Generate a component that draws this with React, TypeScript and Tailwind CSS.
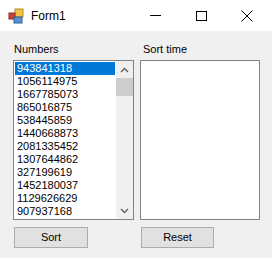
import { FC } from "react";

const numbers = [
  "943841318",
  "1056114975",
  "1667785073",
  "865016875",
  "538445859",
  "1440668873",
  "2081335452",
  "1307644862",
  "327199619",
  "1452180037",
  "1129626629",
  "907937168",
];

const Chevron: FC<{ up?: boolean }> = ({ up }) => (
  <svg width="9" height="6" viewBox="0 0 9 6" className="block">
    <path
      d={up ? "M1 5 L4.5 1.5 L8 5" : "M1 1 L4.5 4.5 L8 1"}
      fill="none"
      stroke="#606060"
      strokeWidth="1.4"
    />
  </svg>
);

const FormIcon: FC = () => (
  <svg width="16" height="16" viewBox="0 0 16 16" className="block">
    <rect x="7" y="1" width="8" height="8" fill="#f3c443" stroke="#b8891c" />
    <rect x="1" y="5" width="6" height="6" fill="#c8453a" stroke="#8e2a22" />
    <rect x="6" y="9" width="8" height="6" fill="#5b8fd0" stroke="#355f9c" />
  </svg>
);

const App: FC = () => {
  return (
    <div className="w-[272px] h-[258px] flex flex-col bg-[#f0f0f0] font-['Liberation_Sans',Arial,sans-serif] text-black overflow-hidden">
      {/* title bar */}
      <div className="h-[31px] bg-white flex items-center shrink-0">
        <div className="ml-[8px]">
          <FormIcon />
        </div>
        <span className="ml-[7px] text-[12px] leading-none">Form1</span>
        <div className="ml-auto mr-[2px] flex items-center h-full">
          <div className="w-[46px] h-full flex items-center justify-center">
            <div className="w-[11px] h-px bg-black" />
          </div>
          <div className="w-[46px] h-full flex items-center justify-center">
            <div className="w-[11px] h-[10px] border border-black" />
          </div>
          <div className="w-[46px] h-full flex items-center justify-center">
            <svg width="12" height="12" viewBox="0 0 12 12">
              <path d="M0.5 0.5 L11.5 11.5 M11.5 0.5 L0.5 11.5" stroke="#000" strokeWidth="1" />
            </svg>
          </div>
        </div>
      </div>

      {/* client area */}
      <div className="flex-1 pt-[12px] pl-[13px] text-[11px]">
        <div className="flex gap-[6px]">
          <div className="w-[121px]">
            <div className="h-[13px] leading-[13px] pl-[1px] mb-[4px]">Numbers</div>
            <div className="h-[160px] border border-[#828282] bg-white flex">
              <div className="flex-1 pt-px pl-px pr-[1px]">
                {numbers.map((n, i) => (
                  <div
                    key={i}
                    className={
                      i === 0
                        ? "h-[13px] leading-[13px] pl-[2px] bg-[#0078d7] text-white"
                        : "h-[13px] leading-[13px] pl-[2px]"
                    }
                  >
                    {n}
                  </div>
                ))}
              </div>
              <div className="w-[17px] bg-[#f0f0f0] flex flex-col">
                <div className="h-[17px] flex items-center justify-center">
                  <Chevron up />
                </div>
                <div className="h-[18px] bg-[#cdcdcd]" />
                <div className="flex-1" />
                <div className="h-[17px] flex items-center justify-center">
                  <Chevron />
                </div>
              </div>
            </div>
            <button className="mt-[7px] ml-px w-[74px] h-[21px] border border-[#adadad] bg-[#e1e1e1] text-[11px] leading-none">
              Sort
            </button>
          </div>
          <div className="w-[120px]">
            <div className="h-[13px] leading-[13px] pl-[3px] mb-[4px]">Sort time</div>
            <div className="h-[160px] border border-[#828282] bg-white" />
            <button className="mt-[7px] ml-px w-[73px] h-[21px] border border-[#adadad] bg-[#e1e1e1] text-[11px] leading-none">
              Reset
            </button>
          </div>
        </div>
      </div>
    </div>
  );
};

export default App;
